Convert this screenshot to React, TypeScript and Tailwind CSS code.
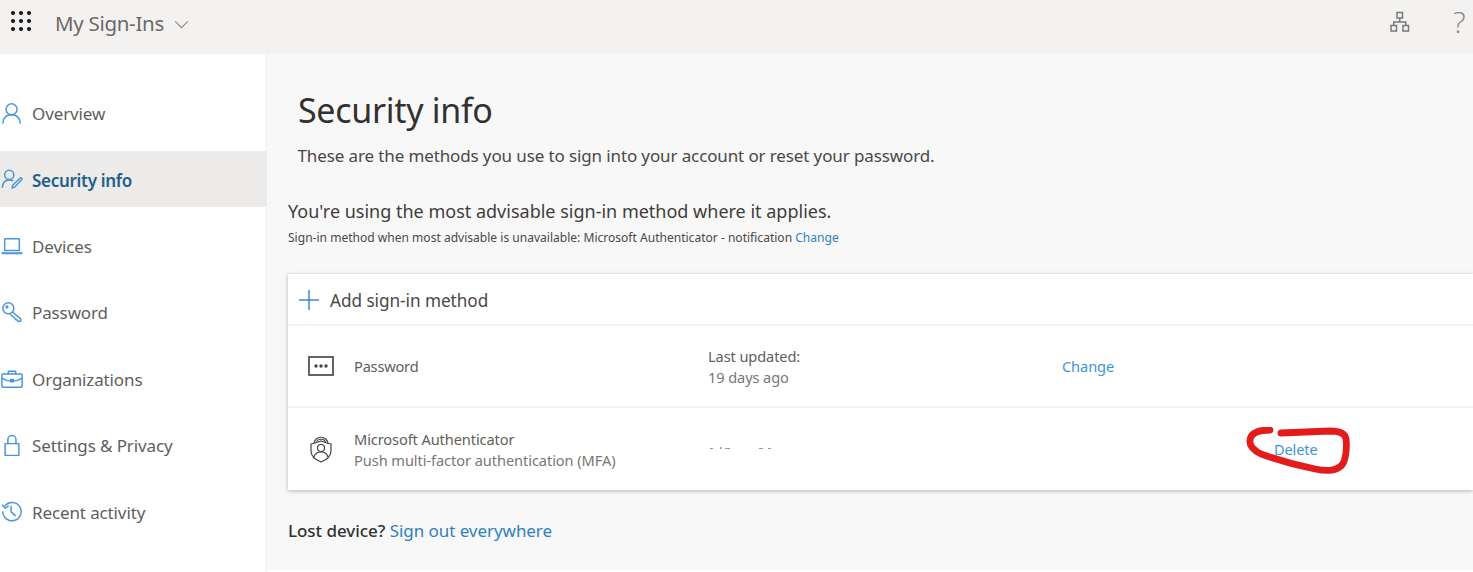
import React from "react";

const blue = "#4796dc";

const Ico = ({ children }: { children: React.ReactNode }) => (
  <svg viewBox="0 0 24 24" width="22" height="22" fill="none" stroke={blue} strokeWidth="1.600" strokeLinecap="round" strokeLinejoin="round" className="shrink-0">
    {children}
  </svg>
);

const items: { label: string; active?: boolean; icon: React.ReactNode }[] = [
  { label: "Overview", icon: <Ico><circle cx="11.500" cy="8" r="6" /><path d="M2 23c.5-5.500 4-9 9.500-9s9 3.500 9.500 9" /></Ico> },
  { label: "Security info", active: true, icon: <Ico><circle cx="9" cy="7.500" r="5" /><path d="M1.500 21c.3-5 3-8 7.500-8 1.500 0 2.800.3 3.800.9" /><path d="M12 22l1-3.500 8-7.500c1-.8 2.500.8 1.500 1.800l-7.500 8z" /></Ico> },
  { label: "Devices", icon: <Ico><rect x="4" y="4" width="16" height="13" rx="0.500" /><path d="M1.500 20h21" strokeWidth="2.200" /></Ico> },
  { label: "Password", icon: <Ico><circle cx="8" cy="8" r="6" /><circle cx="6.500" cy="6.500" r="1" /><path d="M12.500 12l9 7.500v2.500h-3l-1-1.500h-1.500l-1-2-4.500-3.500" /></Ico> },
  { label: "Organizations", icon: <Ico><rect x="1" y="6.500" width="22" height="14.500" rx="1" /><path d="M8 6.500V3.500h8v3" /><path d="M1 11c3 2 7.500 3.500 11 3.500S20 13 23 11" /><rect x="10.500" y="12.500" width="3" height="2.500" fill={blue} /></Ico> },
  { label: "Settings & Privacy", icon: <Ico><rect x="4.500" y="10.500" width="15" height="13" /><path d="M7.500 10.500V6a4.400 4.400 0 0 1 8.800 0v4.500" /></Ico> },
  { label: "Recent activity", icon: <Ico><path d="M4.500 6a10 10 0 1 1-2.500 7" /><path d="M1.500 5.500l3 3.500 3.500-2.500" /><path d="M11 7v6l4.500 4" /></Ico> },
];

export default function App() {
  return (
    <div className="w-[1473px] h-[572px] overflow-hidden flex flex-col bg-white text-[#605e5c] font-['Noto_Sans','Open_Sans',sans-serif]">
      <header className="h-[54px] shrink-0 bg-[#f3f2f1] flex items-center">
        <svg width="22" height="20" viewBox="0 0 22 20" fill="#111" className="ml-[11px] mb-[13px] shrink-0">
          {[2, 10, 18].map((y) => [2, 10, 18].map((x) => <circle key={`${x}-${y}`} cx={x} cy={y} r="2" />))}
        </svg>
        <span className="ml-[22px] text-[20.500px] tracking-[-0.3px] mb-[7px] text-[#6b6967]">My Sign-Ins</span>
        <svg width="15" height="9" viewBox="0 0 16 10" fill="none" stroke="#8a8886" strokeWidth="1.200" className="ml-[10px] mb-[5px]">
          <path d="M1 1.500l7 7 7-7" />
        </svg>
        <svg width="22" height="22" viewBox="0 0 22 22" fill="none" stroke="#77787a" strokeWidth="1.500" className="ml-auto mb-[10px]">
          <rect x="8" y="1.500" width="5.500" height="5.500" />
          <rect x="2" y="14.500" width="5.500" height="5.500" />
          <rect x="14" y="14.500" width="5.500" height="5.500" />
          <path d="M10.750 7v4M4.750 14.500V11h12v3.500" />
        </svg>
        <span className="ml-[42px] w-[20px] text-[30px] leading-none mb-[10px] text-[#8a8886] font-['Open_Sans',sans-serif] font-light">?</span>
      </header>
      <div className="flex flex-1 min-h-0">
        <nav className="w-[267px] shrink-0 pt-[31px] flex flex-col gap-[10.400px] border-r border-[#eeeeee]">
          {items.map((it) => (
            <div key={it.label} className={`h-[56px] shrink-0 flex items-center gap-[9.500px] pl-[0.500px] ${it.active ? "bg-[#edebe9]" : ""}`}>
              {it.icon}
              <span className={`text-[17px] pt-[2px] ${it.active ? "font-semibold text-[#1f5f8f] tracking-[-0.3px]" : "text-[#605e5c] tracking-[-0.12px]"}`}>{it.label}</span>
            </div>
          ))}
        </nav>
        <main className="flex-1 min-w-0 bg-[#f8f8f8] mb-[2px] relative pt-[28px] pl-[21px]">
          <h1 className="ml-[10px] text-[34px] leading-[56px] tracking-[-0.3px] text-[#323130] font-normal">Security info</h1>
          <p className="ml-[9.500px] mt-[6px] text-[17px] leading-[24px] text-[#4a4846] tracking-[-0.12px] whitespace-nowrap">These are the methods you use to sign into your account or reset your password.</p>
          <p className="mt-[30px] text-[18px] leading-[26px] text-[#3f3d3b] whitespace-nowrap">You're using the most advisable sign-in method where it applies.</p>
          <p className="mt-[6px] text-[12.050px] leading-[16px] text-[#4a4846] whitespace-nowrap">
            Sign-in method when most advisable is unavailable: Microsoft Authenticator - notification <span className="text-[#2f80c0]">Change</span>
          </p>
          <section className="mt-[28px] bg-white shadow-[0_1px_4px_rgba(0,0,0,0.28)] text-[14.600px]">
            <div className="h-[52px] flex items-center border-b-2 border-[#f3f3f3]">
              <svg width="24" height="24" viewBox="0 0 24 24" fill="none" stroke="#3a8ad0" strokeWidth="1.500" className="ml-[9px] mt-[1px]">
                <path d="M12 2v20M2 12h20" />
              </svg>
              <span className="ml-[9px] pt-[3px] text-[17.200px] tracking-[-0.05px] text-[#4a4846]">Add sign-in method</span>
            </div>
            <div className="h-[82px] flex items-center border-b-2 border-[#f3f3f3] tracking-[-0.1px]">
              <div className="w-[66px] pl-[20px] shrink-0">
                <svg width="26" height="22" viewBox="0 0 26 22" fill="none" stroke="#555" strokeWidth="1.800">
                  <rect x="1" y="2" width="24" height="18" />
                  <g fill="#444" stroke="none"><circle cx="8" cy="11" r="1.700" /><circle cx="13" cy="11" r="1.700" /><circle cx="18" cy="11" r="1.700" /></g>
                </svg>
              </div>
              <span className="w-[354px] shrink-0 pt-[1px] text-[#605e5c] tracking-[-0.2px]">Password</span>
              <div className="w-[354px] shrink-0 pt-[1px] leading-[21px] text-[#605e5c]">
                <div className="text-[#605e5c]">Last updated:</div>
                <div className="text-[#797775]">19 days ago</div>
              </div>
              <span className="pt-[1px] text-[#3f94d6]">Change</span>
            </div>
            <div className="h-[82px] flex items-center tracking-[-0.1px]">
              <div className="w-[66px] pl-[21px] shrink-0">
                <svg width="24" height="28" viewBox="0 0 24 28" fill="none" stroke="#444" strokeWidth="1.200">
                  <path d="M5 9c0-9 14-9 14 0" />
                  <path d="M7.500 8c0-5 9-5 9 0" />
                  <path d="M12 6c5 2 8 2.500 10 3v7c0 5-5 9-10 11C7 25 2 21 2 16V9c2-.5 5-1 10-3z" />
                  <circle cx="12" cy="13" r="3.500" />
                  <path d="M5 22c1-4 3.500-5 7-5s6 1 7 5" />
                </svg>
              </div>
              <div className="w-[354px] shrink-0 leading-[21px] pt-[1px]">
                <div className="text-[#605e5c]">Microsoft Authenticator</div>
                <div className="text-[#797775] whitespace-nowrap tracking-[-0.07px]">Push multi-factor authentication (MFA)</div>
              </div>
              <div className="w-[566px] shrink-0 h-[6px] mt-[-2px]">
                <svg width="72" height="6" viewBox="0 0 72 6" fill="#999">
                  <rect x="2" y="3" width="3" height="1" /><rect x="12" y="2" width="1.500" height="2" /><rect x="17" y="3" width="5" height="1" /><rect x="51" y="3" width="4" height="1" /><rect x="60" y="3" width="3" height="1" />
                </svg>
              </div>
              <span className="pt-[1px] text-[14.500px] text-[#3f94d6]">Delete</span>
            </div>
          </section>
          <p className="mt-[28px] text-[17px] leading-[26px] tracking-[-0.05px] whitespace-nowrap">
            <span className="font-medium text-[#323130]">Lost device?</span> <span className="text-[#2f80c0]">Sign out everywhere</span>
          </p>
          <svg width="110" height="54" viewBox="0 0 110 54" fill="none" stroke="#e31b1b" strokeWidth="6.800" strokeLinecap="round" strokeLinejoin="round" className="absolute left-[978px] top-[373px]">
            <path d="M25 3C15 3 6 5 5 13c-1 7 5 11 11 14 14 5 34 11 54 15 10 2 20 3 27-4 4-5 5-18 4-26-1-7-9-8-16-8L36 6" />
          </svg>
        </main>
      </div>
    </div>
  );
}
